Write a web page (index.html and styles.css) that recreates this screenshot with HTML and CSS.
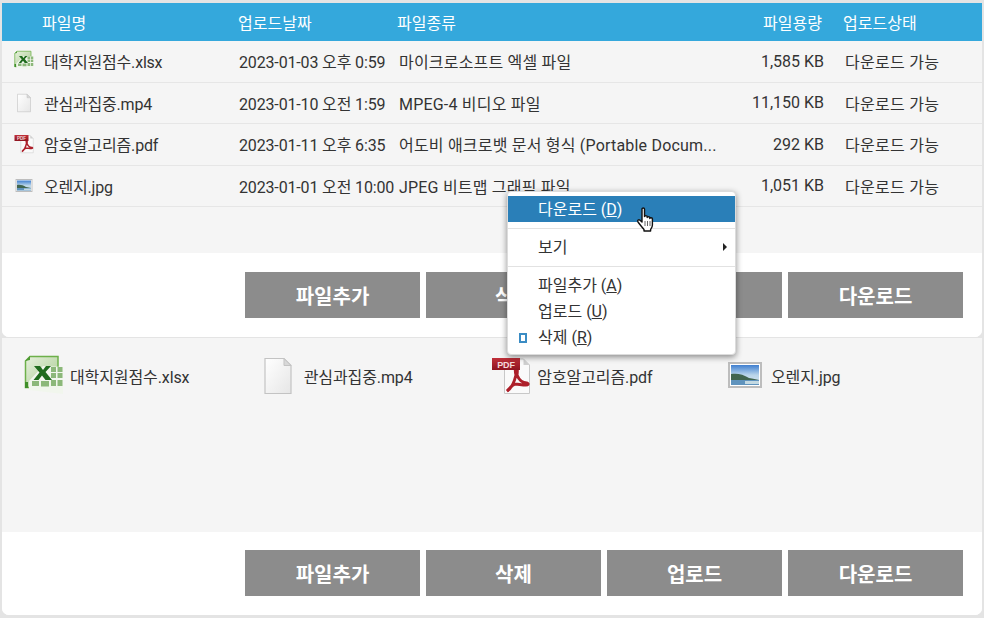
FILE: index.html
```html
<!DOCTYPE html>
<html lang="ko">
<head>
<meta charset="utf-8">
<title>파일 업로드</title>
<link rel="stylesheet" href="styles.css">
</head>
<body>
<svg class="defs" width="0" height="0" aria-hidden="true">
  <defs>
    <linearGradient id="sky" x1="0" y1="0" x2="0" y2="1"><stop offset="0" stop-color="#3f7fd0"/><stop offset=".5" stop-color="#b9d5ea"/><stop offset="1" stop-color="#d9e6ee"/></linearGradient>
    <linearGradient id="sheet" x1="0" y1="0" x2="1" y2="1"><stop offset="0" stop-color="#ffffff"/><stop offset="1" stop-color="#e6e6e6"/></linearGradient>
    <linearGradient id="xframe" x1="0" y1="0" x2="1" y2="1"><stop offset="0" stop-color="#e6f0dc"/><stop offset="1" stop-color="#a9cc92"/></linearGradient>
    <linearGradient id="banner" x1="0" y1="0" x2="0" y2="1"><stop offset="0" stop-color="#c0303a"/><stop offset="1" stop-color="#8e1420"/></linearGradient>
    <symbol id="i-xlsx" viewBox="0 0 48 48">
      <path d="M10 4.500h28v31H5.500V9z" fill="url(#xframe)" stroke="#6db04a" stroke-width="1.500"/>
      <path d="M5 9l5-5v4z" fill="#4f9a35"/>
      <path d="M5 30h3v6H5z" fill="#3f8f2a"/>
      <path d="M9 29l14-15 20 1v27L9 38z" fill="#f1f6ed"/>
      <path d="M31 15h5v5h-5zM37.500 15h5v5h-5zM31 21h5v5h-5zM37.500 21h5v5h-5zM12 29h7v5h-7zM21 29h8v5.500h-8zM31 28h5v6h-5zM37.500 28h5v6h-5z" fill="#8cb87a"/>
      <path d="M14 14h6l3 4 3-4h5l-5.500 6 6.500 8h-6.500l-3.500-4.500-3.500 4.500h-5l6-7.500z" fill="#1f6b1d"/>
    </symbol>
    <symbol id="i-doc" viewBox="0 0 48 48">
      <path d="M11 6.500h19l7 7v28H11z" fill="url(#sheet)" stroke="#c3c3c3" stroke-width="1.200"/>
      <path d="M30 6.500v7h7z" fill="#d8d8d8" stroke="#c3c3c3" stroke-width="1"/>
    </symbol>
    <symbol id="i-pdf" viewBox="0 0 48 48">
      <path d="M17.500 7h19l6 6v28.500h-25z" fill="#fafafa" stroke="#c8c8c8" stroke-width="1"/>
      <path d="M36.500 7v6h6z" fill="#cfcfcf"/>
      <path d="M20 39c4-2 7-8 9-16-1-4-1-6 0-7 1.500 0 1.500 3 1 7 2 5 5 8 10 8 2 1 1 2-1 2-4 0-8-1-11-1-3 1-5 4-8 7z" fill="none" stroke="#ad1f2a" stroke-width="3"/>
      <rect x="5" y="6" width="28" height="12" fill="url(#banner)"/>
      <text x="19" y="15.500" class="pdf-label">PDF</text>
    </symbol>
    <symbol id="i-jpg" viewBox="0 0 48 48">
      <rect x="7" y="10" width="34" height="26" fill="#fff" stroke="none"/>
      <rect x="8" y="11" width="32" height="24" fill="none" stroke="#bdbdbd" stroke-width="2"/>
      <rect x="10" y="13" width="28" height="20" fill="url(#sky)"/>
      <path d="M10 22c6-1 12 0 18 4 4 1 7 1 10 2v1H10z" fill="#41654f"/>
      <rect x="10" y="28" width="28" height="5" fill="#5f93bd"/>
      <rect x="24" y="29" width="14" height="3" fill="#c3d9e2"/>
    </symbol>
  </defs>
</svg>

<main class="page">
  <section class="panel">
    <div class="list-area">
      <div class="thead">
        <span>파일명</span>
        <span>업로드날짜</span>
        <span>파일종류</span>
        <span class="num">파일용량</span>
        <span>업로드상태</span>
      </div>
      <div class="row">
        <svg class="ico-s"><use href="#i-xlsx"/></svg>
        <span class="name">대학지원점수.xlsx</span>
        <span class="date">2023-01-03 오후 0:59</span>
        <span class="type">마이크로소프트 엑셀 파일</span>
        <span class="num">1,585 KB</span>
        <span class="state">다운로드 가능</span>
      </div>
      <div class="row">
        <svg class="ico-s"><use href="#i-doc"/></svg>
        <span class="name">관심과집중.mp4</span>
        <span class="date">2023-01-10 오전 1:59</span>
        <span class="type">MPEG-4 비디오 파일</span>
        <span class="num">11,150 KB</span>
        <span class="state">다운로드 가능</span>
      </div>
      <div class="row">
        <svg class="ico-s"><use href="#i-pdf"/></svg>
        <span class="name">암호알고리즘.pdf</span>
        <span class="date">2023-01-11 오후 6:35</span>
        <span class="type">어도비 애크로뱃 문서 형식 (Portable Docum...</span>
        <span class="num">292 KB</span>
        <span class="state">다운로드 가능</span>
      </div>
      <div class="row">
        <svg class="ico-s"><use href="#i-jpg"/></svg>
        <span class="name">오렌지.jpg</span>
        <span class="date">2023-01-01 오전 10:00</span>
        <span class="type">JPEG 비트맵 그래픽 파일</span>
        <span class="num">1,051 KB</span>
        <span class="state">다운로드 가능</span>
      </div>
    </div>
    <div class="actions">
      <button class="btn">파일추가</button>
      <button class="btn">삭제</button>
      <button class="btn">업로드</button>
      <button class="btn">다운로드</button>
    </div>
  </section>

  <section class="panel">
    <div class="icon-area">
      <div class="tile"><svg class="ico-l"><use href="#i-xlsx"/></svg><span>대학지원점수.xlsx</span></div>
      <div class="tile"><svg class="ico-l"><use href="#i-doc"/></svg><span>관심과집중.mp4</span></div>
      <div class="tile"><svg class="ico-l"><use href="#i-pdf"/></svg><span>암호알고리즘.pdf</span></div>
      <div class="tile"><svg class="ico-l"><use href="#i-jpg"/></svg><span>오렌지.jpg</span></div>
    </div>
    <div class="actions actions-second">
      <button class="btn">파일추가</button>
      <button class="btn">삭제</button>
      <button class="btn">업로드</button>
      <button class="btn">다운로드</button>
    </div>
  </section>
</main>

<nav class="menu">
  <div class="mi mi-active">다운로드 (<u>D</u>)</div>
  <div class="sep"></div>
  <div class="mi mi-sub">보기</div>
  <div class="sep"></div>
  <div class="mi">파일추가 (<u>A</u>)</div>
  <div class="mi">업로드 (<u>U</u>)</div>
  <div class="mi"><i class="tofu"></i>삭제 (<u>R</u>)</div>
</nav>

<svg class="cursor" width="20" height="26" viewBox="0 0 20 26">
  <path d="M6 2c0-1.300 2.500-1.300 2.500 0v7.500c0-1.200 2.700-1.200 2.700 0v1c0-1.200 2.600-1.200 2.600 0v1c0-1.100 2.600-1.100 2.600.3v6.200c0 2-1 3.200-1.800 4.500v1.500H8v-1.500C6 20 4.500 18.500 2 15c-1-1.500.7-3 2-1.800L6 15z" fill="#fff" stroke="#111" stroke-width="1.400" stroke-linejoin="round"/>
  <path d="M9 14v5M11.500 14v5M14 14v5" stroke="#555" stroke-width=".9" fill="none"/>
</svg>
</body>
</html>
```
FILE: styles.css
```css
* { box-sizing: border-box; }
html, body { margin: 0; height: 100%; }
body {
  position: relative;
  width: 984px;
  height: 618px;
  overflow: hidden;
  background: #e4e4e4;
  font-family: Roboto, "Noto Sans CJK KR", sans-serif;
  font-size: 16px;
  color: #333;
}
.defs { position: absolute; }
.page { display: flex; flex-direction: column; padding: 3px 2px 0; gap: 1px; }
.panel { display: flex; flex-direction: column; background: #fff; border-radius: 0 0 7px 7px; overflow: hidden; }
.list-area { height: 250px; background: #f5f5f5; }
.thead {
  display: grid;
  grid-template-columns: 196px 159px 309px 116px 140px;
  height: 38px;
  padding-left: 40px;
  align-items: center;
  background: #34a8dc;
  color: #fff;
  white-space: nowrap;
}
.thead span:last-child { margin-left: 21px; }
.row {
  display: grid;
  grid-template-columns: 24px 203px 161px 312px 112px 1fr;
  height: 41.500px;
  padding-left: 10px;
  align-items: center;
  border-bottom: 1px solid #e6e6e6;
  white-space: nowrap;
}
.name { padding-left: 8px; letter-spacing: -.2px; }
.date { letter-spacing: -.15px; }
.state { margin-left: 21px; letter-spacing: .3px; }
.num { text-align: right; }
.type { margin-left: -1px; letter-spacing: .2px; }
.ico-s { width: 24px; height: 24px; display: block; }
.ico-l { width: 48px; height: 48px; display: block; flex: none; }
.pdf-label { font: bold 9px "Liberation Sans", sans-serif; fill: #f3dada; text-anchor: middle; }
.actions { display: flex; justify-content: flex-end; gap: 6px; padding: 19px; height: 84px; background: #fff; }
.actions-second { padding-top: 18px; height: 83px; }
.btn {
  width: 175px;
  height: 46px;
  border: 0;
  padding: 0;
  background: #8c8c8c;
  color: #fff;
  font: bold 20px Roboto, "Noto Sans CJK KR", sans-serif;
}
.icon-area {
  display: grid;
  grid-template-columns: repeat(4, 233.670px);
  height: 194px;
  padding: 14px 0 0 18px;
  align-items: start;
  background: #f5f5f5;
}
.tile { display: flex; align-items: center; gap: 2px; white-space: nowrap; letter-spacing: -.1px; }
.menu {
  position: absolute;
  left: 507px;
  top: 191px;
  width: 229px;
  padding: 4px 0;
  background: #fff;
  border: 1px solid #dcdcdc;
  border-radius: 4px;
  box-shadow: 0 2px 6px rgba(0, 0, 0, .45);
}
.mi { position: relative; height: 26px; line-height: 28px; padding-left: 30px; }
.mi-active { background: #2a7fb8; color: #fff; }
.mi-sub::after {
  content: "";
  position: absolute;
  right: 8px;
  top: 9px;
  border-left: 4px solid #222;
  border-top: 4px solid transparent;
  border-bottom: 4px solid transparent;
}
.sep { height: 1px; margin: 5.500px 0; background: #e2e2e2; }
.tofu {
  position: absolute;
  left: 11px;
  top: 9px;
  width: 8px;
  height: 10px;
  border: 2px solid #3a8cc4;
}
.cursor { position: absolute; left: 636px; top: 207px; }
```
